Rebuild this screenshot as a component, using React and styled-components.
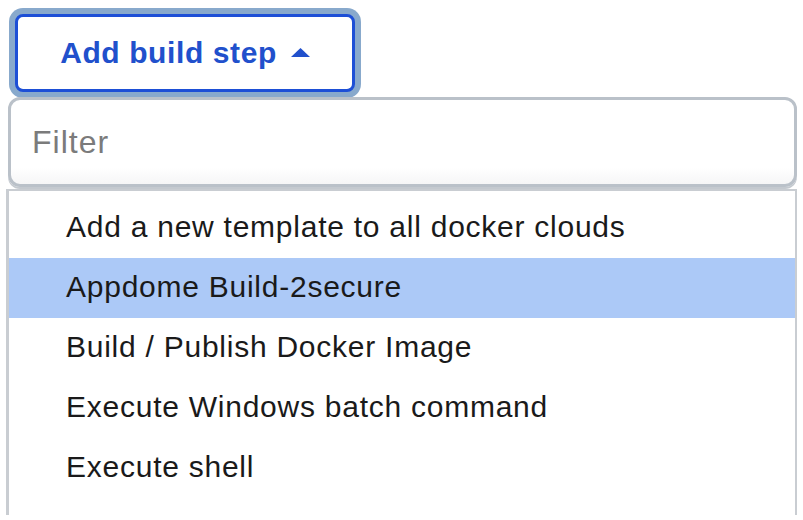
import React from "react";
import styled, { createGlobalStyle } from "styled-components";

const Global = createGlobalStyle`
  html, body { margin: 0; padding: 0; background: #ffffff; }
  body { width: 803px; height: 520px; overflow: hidden; font-family: "Liberation Sans", Arial, sans-serif; }
`;

const Page = styled.div`
  display: flex;
  flex-direction: column;
  padding: 14px 6px 0 6px;
  height: 515px;
  box-sizing: border-box;
  overflow: hidden;
`;

const ButtonRow = styled.div`
  display: flex;
  padding-left: 9px;
`;

const DropButton = styled.button`
  display: flex;
  align-items: center;
  justify-content: center;
  gap: 14px;
  width: 340px;
  height: 78px;
  box-sizing: border-box;
  border: 3px solid #1d4fd6;
  border-radius: 8px;
  background: #ffffff;
  box-shadow: 0 0 0 6px #88a9cc;
  color: #2150cc;
  font-family: "Liberation Sans", Arial, sans-serif;
  font-weight: 700;
  font-size: 30px;
  letter-spacing: 0.6px;
  padding: 0 0 1px 0;
  cursor: pointer;
`;

const Caret = styled.svg`
  width: 19px;
  height: 9px;
  flex: none;
`;

const FilterInput = styled.input`
  margin: 5px 0 0 2px;
  height: 90px;
  box-sizing: border-box;
  border: 3px solid #bac1c9;
  border-radius: 12px;
  padding: 0 21px;
  font-family: "Liberation Sans", Arial, sans-serif;
  font-size: 32px;
  letter-spacing: 1px;
  color: #222;
  background: linear-gradient(#ffffff 80%, #f6f6f7);
  box-shadow: 0 2px 0 #c4c9cf;
  outline: none;
  &::placeholder { color: #7b7b7b; }
`;

const Menu = styled.ul`
  list-style: none;
  margin: 2px 0 0 0;
  padding: 7px 0 0 0;
  border: 2px solid #c9cdd2;
  border-left-width: 3px;
  border-bottom: none;
  background: #ffffff;
  flex: 1;
  overflow: hidden;
`;

const Item = styled.li`
  height: 60px;
  display: flex;
  align-items: center;
  padding-left: 57px;
  padding-bottom: 2px;
  box-sizing: border-box;
  font-family: "Liberation Sans", Arial, sans-serif;
  font-size: 30px;
  letter-spacing: 0.75px;
  color: #1a1a1a;
  background: ${(p) => (p.$active ? "#acc9f7" : "transparent")};
  white-space: nowrap;
`;

const items = [
  "Add a new template to all docker clouds",
  "Appdome Build-2secure",
  "Build / Publish Docker Image",
  "Execute Windows batch command",
  "Execute shell",
  "Invoke top-level Maven targets",
];

export default function App() {
  return (
    <>
      <Global />
      <Page>
        <ButtonRow>
          <DropButton type="button">
            Add build step
            <Caret viewBox="0 0 19 9">
              <path d="M9.5 0 L19 9 L0 9 Z" fill="#2150cc" />
            </Caret>
          </DropButton>
        </ButtonRow>
        <FilterInput placeholder="Filter" />
        <Menu>
          {items.map((t, i) => (
            <Item key={t} $active={i === 1}>
              {t}
            </Item>
          ))}
        </Menu>
      </Page>
    </>
  );
}
